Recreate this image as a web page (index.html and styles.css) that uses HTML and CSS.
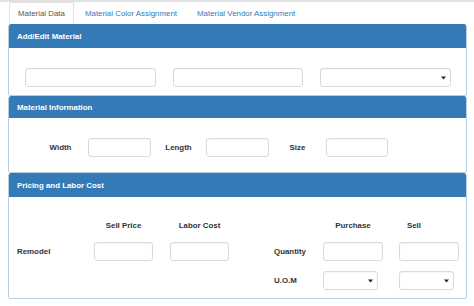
FILE: index.html
```html
<!DOCTYPE html>
<html>
<head>
<meta charset="utf-8">
<link rel="stylesheet" href="styles.css">
</head>
<body>
<div class="topstrip"></div>
<div class="page">
  <ul class="tabs">
    <li class="tab active">Material Data</li>
    <li class="tab">Material Color Assignment</li>
    <li class="tab">Material Vendor Assignment</li>
  </ul>

  <div class="panel">
    <div class="panel-head h1">Add/Edit Material</div>
    <div class="body body-add">
      <div class="inp w131"></div>
      <div class="inp w130"></div>
      <div class="inp sel w131"><svg class="caret" width="5" height="4" viewBox="0 0 5 4"><path d="M0 0.5h5L2.5 3.5z" fill="#222"/></svg></div>
    </div>
  </div>

  <div class="panel">
    <div class="panel-head h2">Material Information</div>
    <div class="body body-info">
      <span class="lbl">Width</span><div class="inp"></div>
      <span class="lbl">Length</span><div class="inp"></div>
      <span class="lbl">Size</span><div class="inp"></div>
    </div>
  </div>

  <div class="panel">
    <div class="panel-head h3">Pricing and Labor Cost</div>
    <div class="body body-price">
      <span></span><span class="lbl">Sell Price</span><span></span><span class="lbl">Labor Cost</span><span></span><span></span><span class="lbl">Purchase</span><span></span><span class="lbl sell">Sell</span>
      <span class="lbl left">Remodel</span><div class="inp"></div><span></span><div class="inp"></div><span></span><span class="lbl left">Quantity</span><div class="inp"></div><span></span><div class="inp"></div>
      <span></span><span></span><span></span><span></span><span></span><span class="lbl left">U.O.M</span><div class="inp sel small"><svg class="caret" width="5" height="4" viewBox="0 0 5 4"><path d="M0 0.5h5L2.5 3.5z" fill="#222"/></svg></div><span></span><div class="inp sel small"><svg class="caret" width="5" height="4" viewBox="0 0 5 4"><path d="M0 0.5h5L2.5 3.5z" fill="#222"/></svg></div>
    </div>
  </div>
</div>
</body>
</html>
```
FILE: styles.css
```css
html, body {
  margin: 0;
  padding: 0;
  background: #fff;
  font-family: "Liberation Sans", Arial, sans-serif;
  color: #333;
}
.topstrip {
  height: 2px;
  background: #e2e2e2;
}
.page {
  width: 459px;
  margin-left: 8px;
}
.tabs {
  list-style: none;
  margin: 0;
  padding: 0 0 0 1px;
  display: flex;
  height: 22px;
}
.tab {
  font-size: 7.9px;
  color: #337ab7;
  padding: 0 8px;
  margin-right: 2px;
  line-height: 22px;
  border: 1px solid transparent;
  border-bottom: 0;
  border-radius: 2px 2px 0 0;
}
.tab.active {
  color: #555;
  border-color: #e3e3e3;
  background: #fff;
}
.panel {
  border: 1px solid #b9cde0;
  border-radius: 3px;
  overflow: hidden;
  border-top: 0;
}
.panel-head {
  background: #337ab7;
  color: #fff;
  font-weight: bold;
  font-size: 7.9px;
  padding-left: 9px;
  display: flex;
  align-items: center;
  margin: 0 -1px;
}
.h1 { height: 24px; }
.h2 { height: 22px; }
.h3 { height: 24px; }
.body {
  background: #fff;
}
.inp {
  box-sizing: border-box;
  height: 19px;
  border: 1px solid #dadada;
  border-radius: 3px;
  box-shadow: inset 0 1px 1px rgba(0,0,0,0.04);
  background: #fff;
  position: relative;
}
.sel .caret {
  position: absolute;
  right: 4px;
  top: 7px;
}
.body-add {
  display: flex;
  gap: 17px;
  padding: 20px 0 8px 16px;
}
.w131 { width: 131px; }
.w130 { width: 130px; }
.lbl {
  font-size: 7.9px;
  font-weight: bold;
  color: #333;
  text-align: center;
}
.body-info {
  display: grid;
  grid-template-columns: 55px 63px 55px 63px 57px 62px;
  align-items: center;
  padding: 20px 0 15px 24px;
}
.body-price {
  display: grid;
  grid-template-columns: 77px 59px 17px 59px 45px 49px 60px 16px 60px;
  grid-template-rows: 14px 19px 19px;
  row-gap: 10px;
  align-items: center;
  padding: 21px 0 8px 8px;
}
.lbl.left { text-align: left; }
.lbl.sell { padding-right: 30px; }
.inp.small { width: 55px; }
```
